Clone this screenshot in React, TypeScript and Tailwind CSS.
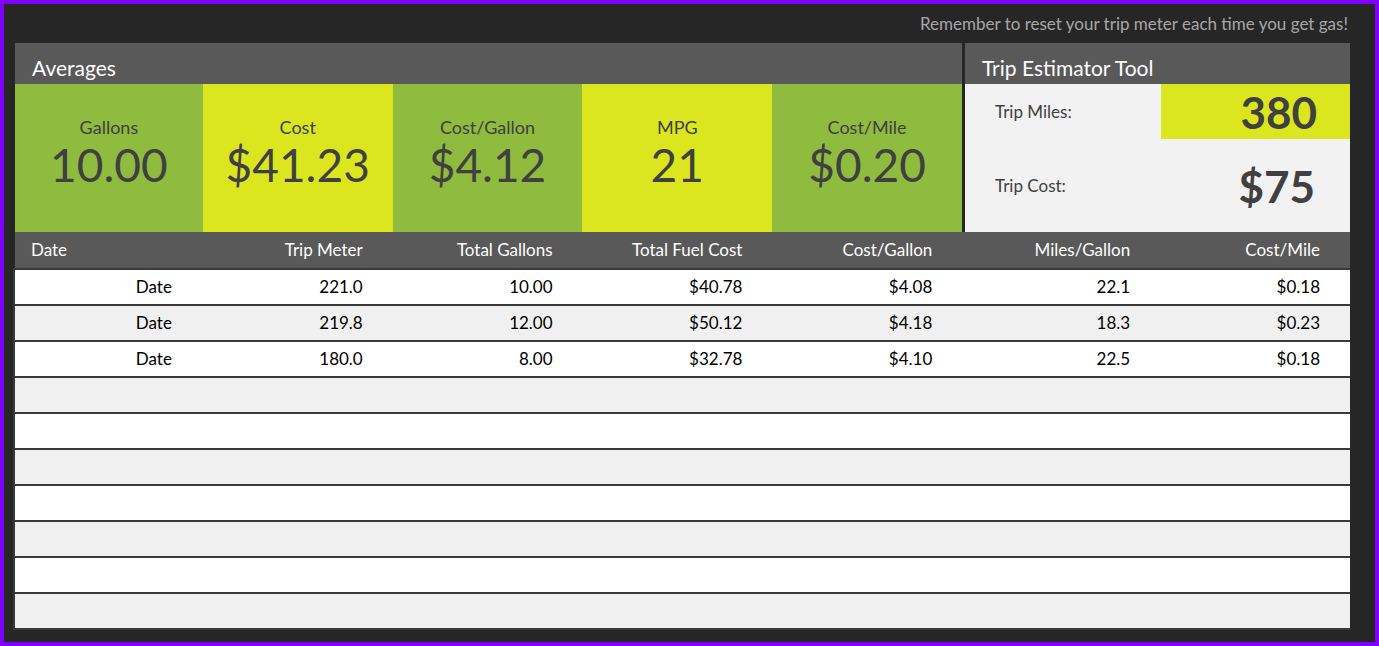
const F = { fontFamily: "Lato, 'Open Sans', sans-serif" };

const tiles = [
  { l: "Gallons", v: "10.00", c: "bg-[#8fbb3e]" },
  { l: "Cost", v: "$41.23", c: "bg-[#dbe61f]" },
  { l: "Cost/Gallon", v: "$4.12", c: "bg-[#8fbb3e]" },
  { l: "MPG", v: "21", c: "bg-[#dbe61f]" },
  { l: "Cost/Mile", v: "$0.20", c: "bg-[#8fbb3e]" },
];
const heads = ["Trip Meter", "Total Gallons", "Total Fuel Cost", "Cost/Gallon", "Miles/Gallon", "Cost/Mile"];
const widths = ["w-[188px]", "w-[190px]", "w-[190px]", "w-[190px]", "w-[190px]", "w-[198px]", "w-[190px]"];
const rows = [
  ["Date", "221.0", "10.00", "$40.78", "$4.08", "22.1", "$0.18"],
  ["Date", "219.8", "12.00", "$50.12", "$4.18", "18.3", "$0.23"],
  ["Date", "180.0", "8.00", "$32.78", "$4.10", "22.5", "$0.18"],
  ...Array.from({ length: 7 }, () => ["", "", "", "", "", "", ""]),
];

export default function App() {
  return (
    <div style={F} className="w-[1379px] h-[646px] bg-[#8000ff] p-[4px]">
      <div className="w-full h-full bg-[#262626] flex flex-col">
        <div className="h-[39px] flex items-center justify-end pr-[27px] text-[17px] text-[#a6a6a6]">
          Remember to reset your trip meter each time you get gas!
        </div>
        <div className="ml-[11px] w-[1335px] flex flex-col">
          <div className="flex h-[189px]">
            <div className="w-[947px] flex flex-col">
              <div className="h-[41px] bg-[#595959] text-white text-[21px] pl-[17px] flex items-end pb-[1px]">Averages</div>
              <div className="flex flex-1">
                {tiles.map((t, i) => (
                  <div key={i} className={`${t.c} ${i === 0 ? "w-[188px]" : "w-[190px]"} ${i === 4 ? "w-[189px]" : ""} flex flex-col items-center pt-[32px] text-[#404040]`}>
                    <div className="text-[18px] leading-[22px]">{t.l}</div>
                    <div className="text-[46px] leading-[54px]">{t.v}</div>
                  </div>
                ))}
              </div>
            </div>
            <div className="w-[3px] bg-[#262626]" />
            <div className="flex-1 flex flex-col">
              <div className="h-[41px] bg-[#595959] text-white text-[21px] pl-[17px] flex items-end pb-[1px]">Trip Estimator Tool</div>
              <div className="flex-1 bg-[#f2f2f2] flex flex-col text-[#404040]">
                <div className="flex h-[55px]">
                  <div className="flex-1 pl-[30px] flex items-center text-[17px]">Trip Miles:</div>
                  <div className="w-[189px] bg-[#dbe61f] flex items-center justify-end pr-[33px] text-[44px] font-bold">380</div>
                </div>
                <div className="flex flex-1">
                  <div className="flex-1 pl-[30px] flex items-center text-[17px]">Trip Cost:</div>
                  <div className="w-[189px] flex items-center justify-end pr-[35px] text-[44px] font-bold">$75</div>
                </div>
              </div>
            </div>
          </div>
          <div className="flex h-[36px] bg-[#595959] text-white text-[17px] items-center">
            <div className="w-[188px] pl-[16px]">Date</div>
            {heads.map((h, i) => (
              <div key={i} className={`${widths[i + 1]} text-right pr-[30px]`}>{h}</div>
            ))}
          </div>
          <div className="border-l-[2px] border-[#3a3a3a] -ml-[2px]">
            {rows.map((r, ri) => (
              <div key={ri} className={`flex h-[36px] items-center text-[17px] text-black border-t-[2px] border-[#3a3a3a] ${ri % 2 ? "bg-[#f0f0f0]" : "bg-white"}`}>
                {r.map((c, ci) => (
                  <div key={ci} className={`${widths[ci]} ${ci === 0 ? "pr-[31px]" : "pr-[30px]"} text-right`}>{c}</div>
                ))}
              </div>
            ))}
            <div className="h-[2px] bg-[#3a3a3a]" />
          </div>
        </div>
      </div>
    </div>
  );
}
